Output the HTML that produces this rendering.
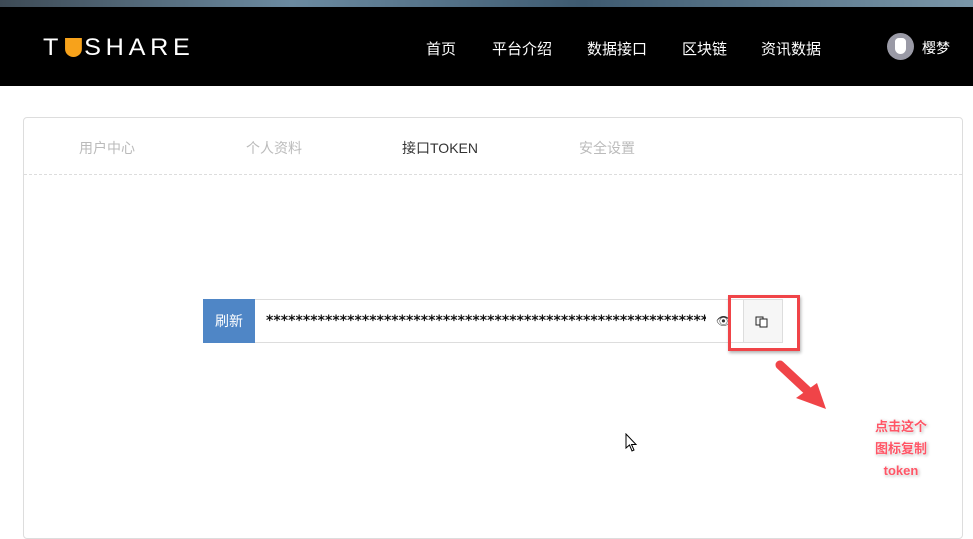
<!DOCTYPE html>
<html><head><meta charset="utf-8"><style>
body{margin:0;width:973px;height:524px;overflow:hidden;background:#fff;font-family:"Liberation Sans","Noto Sans CJK SC",sans-serif;position:relative}
.strip{position:absolute;left:0;top:0;width:973px;height:7px;background:linear-gradient(90deg,#3d4a55,#6b8aa0 30%,#3e5a70 60%,#7a96a8)}
.hdr{position:absolute;left:0;top:7px;width:973px;height:79px;background:#000}
.logo{position:absolute;left:43px;top:34px;color:#fff;font-size:24px;letter-spacing:4.5px;font-weight:normal;transform:scaleX(1.05);transform-origin:left}
.nav{position:absolute;top:38px;color:#fff;font-size:15px}
.card{position:absolute;left:23px;top:117px;width:938px;height:420px;border:1px solid #ddd;border-radius:4px}
.tabs{position:absolute;left:0;top:0;width:938px;height:56px;border-bottom:1px dashed #ddd}
.tab{position:absolute;top:20px;font-size:14px;color:#bbb}
.abs{position:absolute}
</style></head><body>
<div class="strip"></div>
<div class="hdr"></div>
<div class="logo">T<span style="display:inline-block;width:16px;height:19px;background:#f7a21b;border-radius:0 0 8px 8px;vertical-align:-2px;margin:0 2px"></span>SHARE</div>
<div class="nav" style="left:426px">首页</div>
<div class="nav" style="left:492px">平台介绍</div>
<div class="nav" style="left:587px">数据接口</div>
<div class="nav" style="left:682px">区块链</div>
<div class="nav" style="left:761px">资讯数据</div>
<div class="abs" style="left:887px;top:33px;width:27px;height:27px;border-radius:50%;background:#9a9aa6;overflow:hidden"><div style="position:absolute;left:8px;top:5px;width:11px;height:16px;background:#fff;border-radius:4px 4px 6px 6px"></div></div>
<div class="nav" style="left:922px;top:38px;font-size:14px">樱梦</div>
<div class="card"><div class="tabs">
<div class="tab" style="left:55px">用户中心</div>
<div class="tab" style="left:222px">个人资料</div>
<div class="tab" style="left:378px;color:#333">接口TOKEN</div>
<div class="tab" style="left:555px">安全设置</div>
</div></div>
<div class="abs" style="left:203px;top:299px;width:52px;height:44px;background:#4f86c6;color:#fff;font-size:14px;line-height:44px;text-align:center">刷新</div>
<div class="abs" style="left:255px;top:299px;width:526px;height:42px;border:1px solid #ddd;border-left:none"></div>
<div class="abs" style="left:266px;top:313px;width:440px;overflow:hidden;white-space:nowrap;font-family:'DejaVu Sans',sans-serif;font-size:14px;font-weight:bold;letter-spacing:0.05px;color:#111">************************************************************</div>
<div class="abs" style="left:716px;top:314px;font-size:12px;color:#333">👁</div>
<div class="abs" style="left:743px;top:299px;width:38px;height:42px;border:1px solid #ddd;background:#f6f6f6"></div>
<svg class="abs" style="left:755px;top:314px" width="14" height="14"><rect x="1" y="3" width="7" height="8" fill="none" stroke="#222"/><rect x="5" y="5" width="7" height="8" fill="#fff" stroke="#222"/></svg>
<div class="abs" style="left:728px;top:295px;width:66px;height:50px;border:3px solid #f04448;box-shadow:1px 2px 3px rgba(0,0,0,.3)"></div>
<svg class="abs" style="left:770px;top:355px" width="70" height="60"><path d="M10 10 L40 38" stroke="#f04448" stroke-width="9" stroke-linecap="round"/><polygon points="56,54 26,43 47,28" fill="#f04448"/></svg>
<div class="abs" style="left:866px;top:416px;font-size:13px;font-weight:bold;line-height:22px;text-align:center;width:70px;text-shadow:0 0 2px #fff,0 0 3px #fff,1px 1px 3px #999;color:#f56">点击这个<br>图标复制<br>token</div>
<svg class="abs" style="left:625px;top:433px" width="14" height="20"><path d="M1 1 L1 15 L4.5 12 L7 18 L9 17 L6.5 11.5 L11 11.5 Z" fill="#fff" stroke="#000"/></svg>
</body></html>
